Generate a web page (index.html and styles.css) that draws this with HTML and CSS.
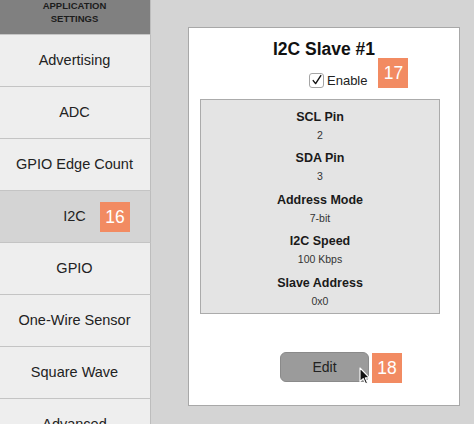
FILE: index.html
```html
<!DOCTYPE html>
<html>
<head>
<meta charset="utf-8">
<link rel="stylesheet" href="styles.css">
</head>
<body>
<div class="layout">
  <nav class="sidebar">
    <div class="side-header">APPLICATION<br>SETTINGS</div>
    <div class="side-item">Advertising</div>
    <div class="side-item">ADC</div>
    <div class="side-item">GPIO Edge Count</div>
    <div class="side-item selected">I2C<span class="badge badge-16">16</span></div>
    <div class="side-item">GPIO</div>
    <div class="side-item">One-Wire Sensor</div>
    <div class="side-item">Square Wave</div>
    <div class="side-item">Advanced</div>
  </nav>
  <main class="main">
    <section class="card">
      <h1 class="card-title">I2C Slave #1</h1>
      <div class="enable-row">
        <label class="enable">
          <span class="checkbox"><svg width="12" height="12" viewBox="0 0 12 12"><path d="M2.2 6.6 L4.6 9.6 L9.8 1.6" fill="none" stroke="#111" stroke-width="1.4" stroke-linecap="round" stroke-linejoin="round"/></svg></span>
          <span class="enable-text">Enable</span>
          <span class="badge badge-17">17</span>
        </label>
      </div>
      <div class="details">
        <div class="field"><div class="label">SCL Pin</div><div class="value">2</div></div>
        <div class="field"><div class="label">SDA Pin</div><div class="value">3</div></div>
        <div class="field"><div class="label">Address Mode</div><div class="value">7-bit</div></div>
        <div class="field"><div class="label">I2C Speed</div><div class="value">100 Kbps</div></div>
        <div class="field"><div class="label">Slave Address</div><div class="value">0x0</div></div>
      </div>
      <div class="actions">
        <button class="edit-btn">Edit
          <svg class="cursor" width="12" height="18" viewBox="0 0 12 18"><path d="M1 1 L1 14.5 L4.2 11.6 L6.6 16.8 L8.6 15.9 L6.3 10.9 L10.6 10.9 Z" fill="#111" stroke="#fff" stroke-width="1.1" stroke-linejoin="round"/></svg>
          <span class="badge badge-18">18</span>
        </button>
      </div>
    </section>
  </main>
</div>
</body>
</html>
```
FILE: styles.css
```css
html, body {
  margin: 0;
  padding: 0;
}
body {
  width: 474px;
  height: 424px;
  overflow: hidden;
  background: #d4d4d4;
  font-family: "Liberation Sans", Arial, sans-serif;
  color: #222;
}
.layout {
  display: flex;
  align-items: flex-start;
}
.sidebar {
  width: 151px;
  flex: none;
  display: flex;
  flex-direction: column;
}
.side-header {
  box-sizing: border-box;
  height: 34px;
  background: #808080;
  color: #1c1c1c;
  font-weight: bold;
  font-size: 9.5px;
  line-height: 12.5px;
  text-align: center;
  padding-right: 1px;
  border-right: 1px solid #bdbdbd;
  border-bottom: 1px solid #c6c6c6;
  height: 35px;
}
.side-item {
  position: relative;
  box-sizing: border-box;
  height: 52px;
  background: #eeeeee;
  border-bottom: 1px solid #c4c4c4;
  border-right: 1px solid #bdbdbd;
  font-size: 14.5px;
  display: flex;
  align-items: center;
  justify-content: center;
  padding-right: 1px;
  padding-bottom: 1px;
}
.side-item.selected {
  background: #d4d4d4;
}
.badge {
  position: absolute;
  width: 30px;
  height: 30px;
  background: #f28b62;
  color: #fff;
  font-size: 17.5px;
  line-height: 30px;
  text-align: center;
  font-family: "Liberation Sans", Arial, sans-serif;
  font-weight: normal;
}
.badge-16 {
  left: 100px;
  top: 11px;
}
.main {
  flex: 1;
  padding-left: 37px;
  padding-top: 27px;
}
.card {
  box-sizing: border-box;
  width: 272px;
  height: 379px;
  background: #fff;
  border: 1px solid #a8a8a8;
  padding-top: 10px;
}
.card-title {
  margin: 0;
  font-size: 17.5px;
  line-height: 22px;
  font-weight: bold;
  text-align: center;
  color: #111;
}
.enable-row {
  margin-top: 5px;
  height: 30px;
  display: flex;
  align-items: center;
  padding-left: 120px;
}
.enable {
  position: relative;
  display: flex;
  align-items: center;
}
.checkbox {
  box-sizing: border-box;
  width: 15px;
  height: 15px;
  border: 1px solid #a5a5a5;
  border-radius: 3px;
  background: #fff;
  display: flex;
  align-items: center;
  justify-content: center;
}
.enable-text {
  margin-left: 3px;
  font-size: 13px;
  color: #222;
}
.badge-17 {
  left: calc(100% + 11px);
  top: -15px;
}
.details {
  box-sizing: border-box;
  margin: 4px 0 0 11px;
  width: 240px;
  background: #e4e4e4;
  border: 1px solid #ababab;
  padding: 8.5px 0 2.5px;
  display: flex;
  flex-direction: column;
  gap: 5.5px;
  text-align: center;
}
.label {
  font-weight: bold;
  font-size: 12.5px;
  line-height: 17px;
  color: #1a1a1a;
}
.value {
  font-size: 10.5px;
  line-height: 19px;
  color: #333;
}
.actions {
  margin-top: 38px;
  display: flex;
  justify-content: center;
}
.edit-btn {
  position: relative;
  box-sizing: border-box;
  width: 89px;
  height: 30px;
  margin-left: 1px;
  background: #9b9b9b;
  border: 1px solid #8a8a8a;
  border-radius: 6px;
  font-family: "Liberation Sans", Arial, sans-serif;
  font-size: 14px;
  color: #222;
  padding: 0;
}
.cursor {
  position: absolute;
  left: 78px;
  top: 14px;
}
.badge-18 {
  left: calc(100% + 4px);
  top: 0px;
}
```
